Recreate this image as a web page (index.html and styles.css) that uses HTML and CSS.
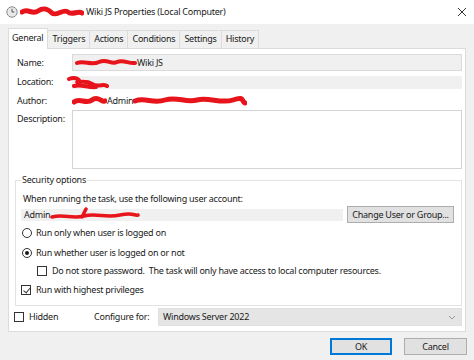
FILE: index.html
```html
<!DOCTYPE html>
<html lang="en">
<head>
  <meta charset="UTF-8">
  <title>Wiki JS Properties (Local Computer)</title>
  <link rel="stylesheet" href="styles.css">
</head>
<body>
  <div class="window">
    <!-- Title bar -->
    <div class="titlebar">
      <svg class="clock" width="12" height="12" viewBox="0 0 12 12">
        <circle cx="6" cy="6" r="5.2" fill="#e8e8e8" stroke="#8a8a8a" stroke-width="1"/>
        <path d="M6 2.8 V6 H8.4" fill="none" stroke="#555" stroke-width="1"/>
      </svg>
      <svg class="scribble" width="64" height="12" viewBox="0 0 64 12">
        <path d="M2 6 C8 2 12 9 18 5 S28 3 32 7 S44 2 48 6 S58 4 62 7" fill="none" stroke="#e8141b" stroke-width="5" stroke-linecap="round"/>
      </svg>
      <span class="title">Wiki JS Properties (Local Computer)</span>
      <svg class="close" width="10" height="10" viewBox="0 0 10 10">
        <path d="M1 1 L9 9 M9 1 L1 9" stroke="#333" stroke-width="1"/>
      </svg>
    </div>

    <div class="main">
      <!-- Tabs -->
      <div class="tabs">
        <div class="tab active">General</div>
        <div class="tab">Triggers</div>
        <div class="tab">Actions</div>
        <div class="tab">Conditions</div>
        <div class="tab">Settings</div>
        <div class="tab">History</div>
      </div>

      <div class="panel">
        <div class="fields">
          <label>Name:</label>
          <div class="input name-input">
            <svg width="62" height="10" viewBox="0 0 62 10">
              <path d="M2 5 C10 2 16 8 24 4 S36 7 42 4 S54 6 60 5" fill="none" stroke="#e8141b" stroke-width="4" stroke-linecap="round"/>
            </svg>Wiki JS
          </div>

          <label>Location:</label>
          <div class="input location-input">
            <svg class="loc-scribble" width="44" height="15" viewBox="0 0 44 15">
              <path d="M3 4 C10 1 16 6 12 7 S20 5 26 9 S38 8 41 11 M8 11 C16 9 22 13 30 12" fill="none" stroke="#e8141b" stroke-width="4" stroke-linecap="round"/>
            </svg>
          </div>

          <label>Author:</label>
          <div class="author">
            <svg width="35" height="12" viewBox="0 0 35 12">
              <path d="M2 7 C8 2 14 10 20 5 S30 8 33 6" fill="none" stroke="#e8141b" stroke-width="5" stroke-linecap="round"/>
            </svg><span>Admin</span><svg width="114" height="12" viewBox="0 0 114 12">
              <path d="M2 6 C12 2 20 9 32 5 S52 8 64 5 S88 9 100 5 S108 6 112 8" fill="none" stroke="#e8141b" stroke-width="5" stroke-linecap="round"/>
            </svg>
          </div>

          <label class="desc-label">Description:</label>
          <div class="description"></div>
        </div>

        <!-- Security options -->
        <fieldset class="security">
          <legend>Security options</legend>
          <div class="account-text">When running the task, use the following user account:</div>
          <div class="account-row">
            <div class="input account-input">Admin<svg width="90" height="16" viewBox="0 0 90 16">
                <path d="M2 10 C14 7 22 12 34 9 S56 11 70 8 S84 9 88 8 M32 10 L36 2" fill="none" stroke="#e8141b" stroke-width="3.5" stroke-linecap="round"/>
              </svg></div>
            <button class="btn">Change User or Group...</button>
          </div>

          <div class="option"><span class="radio"></span>Run only when user is logged on</div>
          <div class="option"><span class="radio checked"></span>Run whether user is logged on or not</div>
          <div class="option indent"><span class="check"></span>Do not store password.&nbsp; The task will only have access to local computer resources.</div>
          <div class="option privileges"><span class="check checked"></span>Run with highest privileges</div>
        </fieldset>

        <div class="bottom-row">
          <div class="option hidden-opt"><span class="check"></span>Hidden</div>
          <span class="configure-label">Configure for:</span>
          <div class="select">
            <span>Windows Server 2022</span>
            <svg width="8" height="5" viewBox="0 0 8 5">
              <path d="M1 1 L4 4 L7 1" fill="none" stroke="#9a9a9a" stroke-width="1"/>
            </svg>
          </div>
        </div>
      </div>

      <!-- Dialog buttons -->
      <div class="footer">
        <button class="btn default">OK</button>
        <button class="btn">Cancel</button>
      </div>
    </div>
  </div>
</body>
</html>
```

FILE: styles.css
```css
/* Basic Reset */
* {
  margin: 0;
  padding: 0;
  box-sizing: border-box;
}

body {
  font-family: "Noto Sans", "Liberation Sans", sans-serif;
  font-size: 9px;
  letter-spacing: -0.25px;
  line-height: 12px;
  color: #1a1a1a;
  background-color: #f0f0f0;
  width: 474px;
  height: 360px;
  overflow: hidden;
}

.window {
  width: 474px;
  height: 360px;
}

/* Title bar */
.titlebar {
  height: 24px;
  background-color: #fff;
  display: flex;
  align-items: center;
  padding-left: 6px;
  padding-right: 7px;
}

.clock {
  margin-right: 2px;
}

.scribble {
  margin-right: 2px;
}

.close {
  margin-left: auto;
}

/* Main area */
.main {
  padding: 4px 8px 0 8px;
}

.tabs {
  display: flex;
  align-items: flex-end;
  height: 20px;
  position: relative;
  z-index: 1;
}

.tab {
  height: 18px;
  line-height: 16px;
  padding: 0 4px;
  border: 1px solid #dcdcdc;
  border-bottom: none;
  border-left: none;
  background-color: #f0f0f0;
}

.tab.active {
  height: 21px;
  line-height: 18px;
  background-color: #fff;
  border-left: 1px solid #dcdcdc;
  padding: 0 4px 0 3px;
  margin-bottom: -1px;
}

.panel {
  width: 458px;
  height: 284px;
  background-color: #fff;
  border: 1px solid #dcdcdc;
  padding: 5px 3px 0 6px;
}

/* Top fields */
.fields {
  display: grid;
  grid-template-columns: 55px 1fr;
  grid-template-rows: 17px 14px 15px 57px;
  align-items: center;
  row-gap: 4px;
  padding-left: 2px;
}

.input {
  background-color: #f0f0f0;
  display: flex;
  align-items: center;
  padding-left: 2px;
}

.name-input {
  height: 17px;
  border: 1px solid #dadada;
}

.location-input {
  height: 13px;
  align-self: end;
}

.loc-scribble {
  margin-left: -8px;
}

.author {
  height: 15px;
  display: flex;
  align-items: center;
}

.desc-label {
  align-self: start;
  padding-top: 1px;
}

.description {
  height: 59px;
  margin-top: -2px;
  align-self: start;
  border: 1px solid #d4d4d4;
  background-color: #fff;
}

/* Security options group */
.security {
  border: 1px solid #e3e3e3;
  margin-top: 5px;
  padding: 7px 5px 0 5px;
  height: 132px;
}

.security legend {
  padding: 0 1px;
  line-height: 12px;
}

.account-text {
  padding-left: 2px;
}

.account-row {
  display: flex;
  align-items: center;
  margin-top: 1px;
}

.account-input {
  width: 322px;
  height: 12px;
  padding-left: 3px;
}

.btn {
  font-family: inherit;
  font-size: 9px;
  letter-spacing: -0.25px;
  color: #1a1a1a;
  background-color: #e1e1e1;
  border: 1px solid #adadad;
  height: 17px;
  padding: 0 4px;
}

.account-row .btn {
  margin-left: 4px;
  width: 107px;
}

.option {
  display: flex;
  align-items: center;
  height: 20px;
}

.option.indent {
  padding-left: 16px;
  height: 16px;
}

.option.privileges {
  height: 22px;
}

.radio {
  width: 10px;
  height: 10px;
  border: 1px solid #333;
  border-radius: 50%;
  margin: 0 4px 0 1px;
  display: flex;
  align-items: center;
  justify-content: center;
}

.radio.checked::after {
  content: "";
  width: 4px;
  height: 4px;
  border-radius: 50%;
  background-color: #1a1a1a;
}

.check {
  width: 10px;
  height: 10px;
  border: 1px solid #333;
  margin-right: 5px;
  position: relative;
}

.check.checked::after {
  content: "";
  position: absolute;
  left: 2.5px;
  top: 0px;
  width: 3px;
  height: 6px;
  border-right: 1px solid #333;
  border-bottom: 1px solid #333;
  transform: rotate(40deg);
}

/* Bottom row */
.bottom-row {
  display: flex;
  align-items: center;
  margin-top: 1px;
}

.hidden-opt {
  width: 80px;
  margin-left: -1px;
}

.configure-label {
  width: 64px;
}

.select {
  flex: 1;
  height: 18px;
  background-color: #e5e5e5;
  border: 1px solid #e0e0e0;
  display: flex;
  align-items: center;
  justify-content: space-between;
  padding: 0 5px 0 4px;
}

/* Footer */
.footer {
  display: flex;
  justify-content: flex-end;
  gap: 12px;
  padding-top: 6px;
  margin-right: -1px;
}

.footer .btn {
  width: 63px;
}

.footer .btn.default {
  width: 62px;
  border: 1px solid #0078d7;
  box-shadow: inset 0 0 0 1px #0078d7;
}
```
